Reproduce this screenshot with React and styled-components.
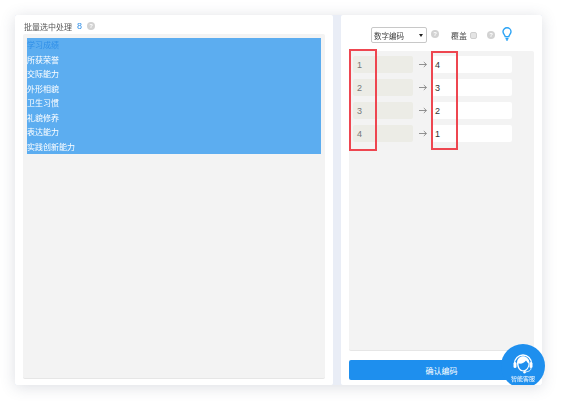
import React from "react";
import styled, { createGlobalStyle } from "styled-components";

const GlobalStyle = createGlobalStyle`
    html, body {
        margin: 0;
        padding: 0;
        background: #ffffff;
    }
    body {
        width: 565px;
        height: 401px;
        overflow: hidden;
        font-family: "Liberation Sans", "Noto Sans CJK SC", sans-serif;
    }
`;

const Page = styled.div`
    padding: 15px 23px 16px 15px;
    width: 565px;
    height: 401px;
    box-sizing: border-box;
    filter: blur(0.4px);
`;

const Board = styled.div`
    position: relative;
    display: flex;
    gap: 8px;
    height: 370px;
    background: #e9edf6;
    box-shadow: 0 2px 14px rgba(60, 70, 100, 0.18);
`;

const LeftPanel = styled.div`
    display: flex;
    flex-direction: column;
    width: 318px;
    box-sizing: border-box;
    padding: 4px 8px 6px 9px;
    background: #fff;
    border-radius: 2px;
`;

const TitleRow = styled.div`
    display: flex;
    align-items: center;
    height: 14px;
    font-size: 8px;
    color: #555;
`;

const Count = styled.span`
    margin-left: 5px;
    font-size: 9px;
    color: #2f8fe8;
`;

const Help = styled.span`
    display: inline-flex;
    align-items: center;
    justify-content: center;
    width: 8px;
    height: 8px;
    margin-left: ${(p) => p.$gap || 5}px;
    margin-bottom: ${(p) => p.$lift || 0}px;
    border-radius: 50%;
    background: #d2d2d2;
    color: #fff;
    font-size: 6px;
    font-weight: 700;
`;

const ListBox = styled.div`
    flex: 1;
    margin: 1px 0 0 -1px;
    padding: 4px;
    background: #f3f3f3;
    border-bottom: 1px solid #e6e6e6;
    border-radius: 2px;
`;

const Selected = styled.ul`
    margin: 0;
    padding: 0;
    list-style: none;
    background: #5cadf0;
`;

const Item = styled.li`
    height: 14.5px;
    line-height: 16.5px;
    font-size: 8px;
    color: ${(p) => (p.$first ? "#2f8fe8" : "#fff")};
`;

const RightPanel = styled.div`
    display: flex;
    flex-direction: column;
    width: 201px;
    box-sizing: border-box;
    padding: 0 8px 5px;
    background: #fff;
    border-radius: 2px;
`;

const Toolbar = styled.div`
    display: flex;
    align-items: center;
    height: 36px;
    box-sizing: border-box;
    padding: 4px 0 0 22px;
    font-size: 8px;
    color: #555;
`;

const Select = styled.div`
    display: flex;
    align-items: center;
    justify-content: space-between;
    width: 56px;
    height: 16px;
    box-sizing: border-box;
    padding: 0 3px 0 2px;
    background: #fff;
    border: 1px solid #c8c8c8;
    border-radius: 2px;
    color: #444;
    font-size: 7.5px;
`;

const Caret = styled.span`
    width: 0;
    height: 0;
    border-left: 2px solid transparent;
    border-right: 2px solid transparent;
    border-top: 3px solid #222;
`;

const CoverLabel = styled.span`
    margin-left: 12px;
`;

const Check = styled.span`
    width: 7px;
    height: 7px;
    box-sizing: border-box;
    margin-left: 3px;
    background: #e4e4e4;
    border: 1px solid #cfcfcf;
    border-radius: 2px;
`;

const Bulb = styled.svg`
    width: 10px;
    height: 14px;
    margin-left: 7px;
    margin-bottom: 3px;
`;

const MapBox = styled.div`
    flex: 1;
    display: flex;
    flex-direction: column;
    gap: 6px;
    padding: 5px 4px;
    background: #f3f3f3;
    border-bottom: 1px solid #e6e6e6;
    border-radius: 2px;
`;

const MapRow = styled.div`
    display: flex;
    align-items: center;
    height: 17px;
    font-size: 9px;
`;

const Source = styled.div`
    display: flex;
    align-items: center;
    width: 60px;
    height: 100%;
    box-sizing: border-box;
    padding-left: 4px;
    background: #ecece6;
    border-radius: 2px;
    color: #777;
`;

const Arrow = styled.svg`
    width: 8px;
    height: 7px;
    margin: 0 5px 0 6px;
`;

const Target = styled.div`
    display: flex;
    align-items: center;
    width: 80px;
    height: 100%;
    box-sizing: border-box;
    padding-left: 3px;
    background: #fff;
    border-radius: 2px;
    color: #333;
`;

const Confirm = styled.button`
    height: 20px;
    margin-top: 9px;
    padding: 0;
    border: 0;
    border-radius: 2px;
    background: #1e8fee;
    color: #fff;
    font-family: inherit;
    font-size: 8px;
`;

const Mark = styled.div`
    position: absolute;
    top: ${(p) => p.$top}px;
    left: ${(p) => p.$left}px;
    width: ${(p) => p.$width}px;
    height: ${(p) => p.$height}px;
    box-sizing: border-box;
    border: 2px solid #ee4650;
`;

const HelpDock = styled.div`
    position: absolute;
    right: -3px;
    bottom: 0;
    width: 44px;
    height: 41px;
    overflow: hidden;
`;

const HelpCircle = styled.div`
    display: flex;
    flex-direction: column;
    align-items: center;
    width: 44px;
    height: 44px;
    padding-top: 8px;
    box-sizing: border-box;
    border-radius: 50%;
    background: #1e8fee;
    color: #fff;
    font-size: 6px;
    line-height: 8px;
`;

const Headset = styled.svg`
    width: 22px;
    height: 23px;
    flex-shrink: 0;
`;

const rows = ["学习成绩", "所获荣誉", "交际能力", "外形相貌", "卫生习惯", "礼貌修养", "表达能力", "实践创新能力"];
const codes = [
    [1, 4],
    [2, 3],
    [3, 2],
    [4, 1],
];

const App = () => {
    return (
        <>
            <GlobalStyle />
            <Page>
                <Board>
                    <LeftPanel>
                        <TitleRow>
                            批量选中处理
                            <Count>8</Count>
                            <Help>?</Help>
                        </TitleRow>
                        <ListBox>
                            <Selected>
                                {rows.map((row, i) => (
                                    <Item key={row} $first={i === 0}>{row}</Item>
                                ))}
                            </Selected>
                        </ListBox>
                    </LeftPanel>
                    <RightPanel>
                        <Toolbar>
                            <Select>
                                数字编码
                                <Caret />
                            </Select>
                            <Help $gap={4} $lift={2}>?</Help>
                            <CoverLabel>覆盖</CoverLabel>
                            <Check />
                            <Help $gap={10}>?</Help>
                            <Bulb viewBox="0 0 10 14" fill="none" stroke="#2ba3f5" strokeWidth="1.4">
                                <path d="M3.2 9.6C3 8 1 7 1 4.8a4 4 0 0 1 8 0C9 7 7 8 6.8 9.6z" />
                                <path d="M3.5 11.5h3M4.2 13h1.6" />
                            </Bulb>
                        </Toolbar>
                        <MapBox>
                            {codes.map(([from, to]) => (
                                <MapRow key={from}>
                                    <Source>{from}</Source>
                                    <Arrow viewBox="0 0 8 7" fill="none" stroke="#777" strokeWidth="0.8">
                                        <path d="M0 3.5h7.4M4.8 1l2.6 2.5L4.8 6" />
                                    </Arrow>
                                    <Target>{to}</Target>
                                </MapRow>
                            ))}
                        </MapBox>
                        <Confirm>确认编码</Confirm>
                    </RightPanel>
                    <Mark $left={334} $top={34} $width={28} $height={102} />
                    <Mark $left={416} $top={36} $width={27} $height={99} />
                    <HelpDock>
                        <HelpCircle>
                            <Headset viewBox="0 0 22 23" fill="none">
                                <path d="M2.500 11.500a8.500 8.500 0 0 1 17 0" stroke="#fff" strokeWidth="1.300" />
                                <path d="M5 11c0-9 12-9 12.500 0 0 5-3 8.500-6.300 8.500S5 16 5 11z" fill="#fff" />
                                <path d="M6.500 11.500c3 .5 6-.5 7.500-3 1 1.500 2 2.500 2.500 3 0 4-2.800 6.800-5.300 6.800s-4.700-2.800-4.700-6.800z" fill="#1e8fee" />
                                <rect x="1.500" y="10" width="3" height="6" rx="1.500" fill="#fff" />
                                <rect x="17.500" y="10" width="3" height="6" rx="1.500" fill="#fff" />
                                <path d="M19 16c0 2.500-2 3.500-6 4" stroke="#fff" strokeWidth="0.900" />
                                <circle cx="12.500" cy="20.300" r="1.200" fill="#fff" />
                            </Headset>
                            智能客服
                        </HelpCircle>
                    </HelpDock>
                </Board>
            </Page>
        </>
    );
};

export default App;
